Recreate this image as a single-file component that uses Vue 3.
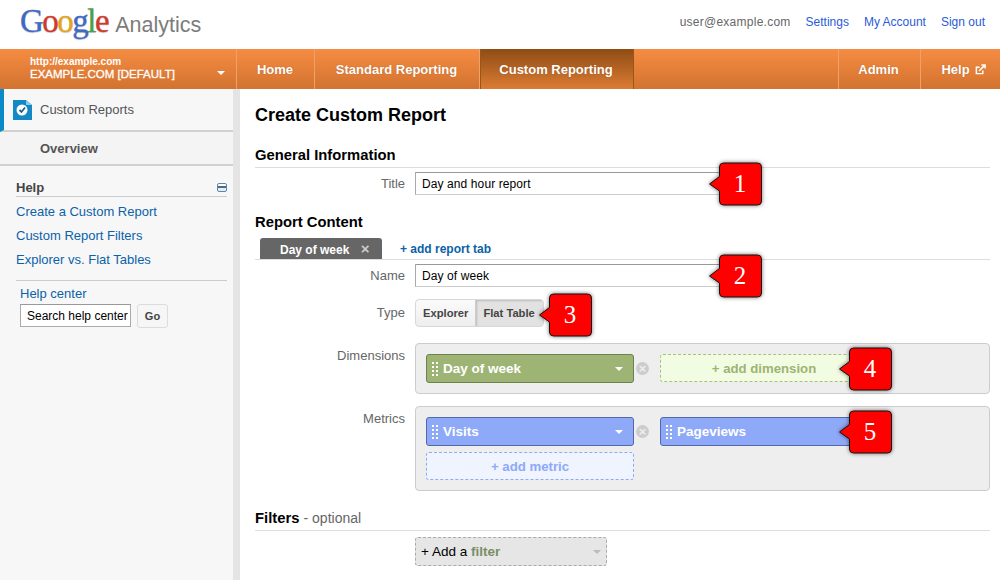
<template>
  <div class="page">
    <header class="top">
      <div class="logo">
        <span class="google"><i class="b">G</i><i class="r">o</i><i class="y">o</i><i class="b">g</i><i class="g">l</i><i class="r">e</i></span>
        <span class="analytics">Analytics</span>
      </div>
      <div class="user-links">
        <span class="email">user@example.com</span>
        <a>Settings</a>
        <a>My Account</a>
        <a>Sign out</a>
      </div>
    </header>

    <nav class="nav">
      <div class="account">
        <div class="account-text">
          <div class="account-url">http://example.com</div>
          <div class="account-name">EXAMPLE.COM [DEFAULT]</div>
        </div>
        <span class="arrow"></span>
      </div>
      <a class="nav-item home">Home</a>
      <a class="nav-item standard">Standard Reporting</a>
      <a class="nav-item custom active">Custom Reporting</a>
      <div class="nav-space"></div>
      <a class="nav-item admin">Admin</a>
      <a class="nav-item help">
        Help
        <svg width="11" height="11" viewBox="0 0 12 12" fill="none" stroke="#fff" stroke-width="1.6">
          <path d="M8.5 7v3.500h-7v-7H5" />
          <path d="M4.500 7.500L10.500 1.500M7 1h4v4" />
        </svg>
      </a>
    </nav>

    <div class="body">
      <aside class="side">
        <div class="side-title">
          <svg width="21" height="22" viewBox="0 0 21 22">
            <path d="M1 1h13l6 5v15H1z" fill="#1388c4" />
            <path d="M14 1l6 5h-6z" fill="#8cc8e8" />
            <circle cx="10" cy="11" r="5.500" fill="#fff" />
            <path d="M7.500 11l2 2L13 8.500" fill="none" stroke="#1b5f8c" stroke-width="1.800" />
          </svg>
          <span>Custom Reports</span>
        </div>
        <div class="side-overview">Overview</div>
        <div class="side-help">
          <div class="help-head">
            <span>Help</span>
            <span class="collapse"></span>
          </div>
          <a v-for="link in helpLinks" :key="link" class="help-link">{{ link }}</a>
          <div class="help-center">
            <a>Help center</a>
            <div class="search">
              <input class="search-box" value="Search help center" />
              <button class="go">Go</button>
            </div>
          </div>
        </div>
      </aside>

      <main class="main">
        <h1>Create Custom Report</h1>

        <h2 class="section first">General Information</h2>
        <div class="row title-row">
          <label>Title</label>
          <input class="field" value="Day and hour report" />
        </div>

        <h2 class="section content-head">Report Content</h2>
        <div class="tabs">
          <div class="tab">Day of week <span class="tab-x">×</span></div>
          <a class="add-tab">+ add report tab</a>
        </div>
        <div class="row name-row">
          <label>Name</label>
          <input class="field" value="Day of week" />
        </div>
        <div class="row type-row">
          <label>Type</label>
          <div class="toggle">
            <span class="toggle-btn">Explorer</span>
            <span class="toggle-btn on">Flat Table</span>
          </div>
        </div>

        <div class="row panel-row dims">
          <label>Dimensions</label>
          <div class="panel">
            <div class="slot">
              <div class="chip green">
                <span class="grip"></span>
                <span class="chip-text">Day of week</span>
                <span class="chip-arrow"></span>
              </div>
            </div>
            <span class="remove">×</span>
            <div class="slot">
              <div class="add green-add">+ add dimension</div>
            </div>
          </div>
        </div>

        <div class="row panel-row metrics">
          <label>Metrics</label>
          <div class="panel">
            <div class="slot">
              <div class="chip blue">
                <span class="grip"></span>
                <span class="chip-text">Visits</span>
                <span class="chip-arrow"></span>
              </div>
              <div class="add blue-add">+ add metric</div>
            </div>
            <span class="remove">×</span>
            <div class="slot">
              <div class="chip blue">
                <span class="grip"></span>
                <span class="chip-text">Pageviews</span>
              </div>
            </div>
          </div>
        </div>

        <h2 class="section filters-head">Filters <span class="optional">- optional</span></h2>
        <div class="row filter-row">
          <label></label>
          <div class="add-filter">
            <span>+ Add a <b>filter</b></span>
            <span class="filter-arrow"></span>
          </div>
        </div>
      </main>
    </div>

    <div
      v-for="c in callouts"
      :key="c.n"
      class="callout"
      :style="{ left: c.x + 'px', top: c.y + 'px' }"
    >
      <svg width="56" height="46" viewBox="0 0 56 46">
        <path
          d="M13.500 6a4 4 0 0 1 4-4h34a4 4 0 0 1 4 4v34a4 4 0 0 1-4 4h-34a4 4 0 0 1-4-4V30L3.500 23L13.500 15.500z"
          fill="#f00"
          stroke="#111"
          stroke-width="1"
        />
      </svg>
      <span class="callout-n">{{ c.n }}</span>
    </div>
  </div>
</template>

<script setup>
const helpLinks = ["Create a Custom Report", "Custom Report Filters", "Explorer vs. Flat Tables"];

const callouts = [
  { n: 1, x: 706, y: 161 },
  { n: 2, x: 706, y: 253 },
  { n: 3, x: 536, y: 292 },
  { n: 4, x: 836, y: 346 },
  { n: 5, x: 836, y: 409 },
];
</script>

<style>
html,
body {
  margin: 0;
  background: #fff;
}
</style>

<style scoped>
.page {
  position: relative;
  width: 1000px;
  height: 580px;
  overflow: hidden;
  font-family: "Liberation Sans", Arial, sans-serif;
  font-size: 12px;
  color: #000;
}

.top {
  height: 49px;
  display: flex;
  justify-content: space-between;
  align-items: center;
  padding: 0 15px 0 20px;
  box-sizing: border-box;
}

.logo {
  display: flex;
  align-items: baseline;
  gap: 7px;
  margin-top: -8px;
}

.google {
  font-family: "Liberation Serif", serif;
  font-size: 33px;
  letter-spacing: -1.500px;
  line-height: 40px;
  -webkit-text-stroke: 0.3px;
  text-shadow: 0 1px 1px rgba(0, 0, 0, 0.2);
}

.google i {
  font-style: normal;
}

.b { color: #3f69c4; }
.r { color: #cf3a2c; }
.y { color: #e2a521; }
.g { color: #4c9f4b; }

.analytics {
  font-size: 21.500px;
  color: #7c7c7c;
}

.user-links {
  display: flex;
  gap: 15px;
  margin-top: -5px;
}

.email {
  color: #666;
  letter-spacing: 0.25px;
}

.user-links a {
  color: #2a5bd7;
}

.nav {
  height: 40px;
  display: flex;
  background: linear-gradient(#f68c43, #d2732f);
  color: #fff;
  font-weight: bold;
  font-size: 13px;
}

.account {
  width: 237px;
  box-sizing: border-box;
  padding: 7px 11px 0 30px;
  display: flex;
  justify-content: space-between;
  border-right: 1px solid #eda26c;
}

.account-url {
  font-size: 10px;
  line-height: 11px;
}

.account-name {
  font-size: 11.500px;
  line-height: 14px;
  font-weight: normal;
  -webkit-text-stroke: 0.3px #fff;
}

.arrow {
  width: 0;
  height: 0;
  margin-top: 15px;
  border: 4px solid transparent;
  border-top: 4px solid #fff;
}

.nav-item {
  display: flex;
  align-items: center;
  justify-content: center;
  gap: 5px;
  box-sizing: border-box;
  padding-right: 2px;
  border-left: 1px solid transparent;
  border-right: 1px solid #eda26c;
  text-shadow: 0 0 1px rgba(120, 60, 10, 0.5);
}

.home { width: 78px; }
.standard { width: 165px; }
.custom { width: 154px; }
.admin { width: 83px; border-left-color: #eda26c; }
.help { width: 79px; border-right: none; padding: 0 0 0 5px; }

.active {
  background: linear-gradient(#8f4c14, #dc7c34);
  border: 1px solid #9a5517;
  border-bottom: none;
  border-top: none;
}

.nav-space {
  flex: 1;
}

.body {
  display: flex;
  height: 491px;
}

.side {
  width: 233px;
  flex-shrink: 0;
  background: #f7f7f7;
  color: #555;
  box-sizing: border-box;
}

.side-title {
  height: 43px;
  box-sizing: border-box;
  border-left: 4px solid #0a8ac8;
  border-bottom: 2px solid #d0d0d0;
  display: flex;
  align-items: center;
  gap: 7px;
  padding-left: 8px;
  font-size: 13px;
}

.side-overview {
  height: 34px;
  line-height: 34px;
  padding-left: 40px;
  font-weight: bold;
  font-size: 13px;
  background: #f4f4f4;
  border-bottom: 2px solid #d0d0d0;
  box-sizing: border-box;
}

.side-help {
  padding: 14px 6px 0 16px;
  display: flex;
  flex-direction: column;
}

.help-head {
  display: flex;
  justify-content: space-between;
  align-items: center;
  font-weight: bold;
  font-size: 13px;
  color: #444;
  line-height: 15px;
  padding-bottom: 1px;
  border-bottom: 1px solid #ccc;
  margin-bottom: 3px;
}

.collapse {
  width: 8px;
  height: 7px;
  border: 1px solid #5b87a8;
  border-radius: 2px;
  background: linear-gradient(#fff 35%, #4a6a88 35%, #4a6a88 60%, #e3ecf2 60%);
}

.help-link {
  color: #0b62a8;
  font-size: 13px;
  line-height: 24px;
}

.help-center {
  margin-top: 8px;
  border-top: 1px solid #ccc;
  padding: 6px 0 0 4px;
  color: #0b62a8;
  font-size: 13px;
  line-height: 14px;
}

.search {
  display: flex;
  gap: 6px;
  margin-top: 3px;
}

.search-box {
  width: 111px;
  height: 23px;
  box-sizing: border-box;
  padding: 0 0 0 6px;
  border: 1px solid #aaa;
  border-top-color: #999;
  background: #fff;
  font: 12px "Liberation Sans", Arial, sans-serif;
  color: #000;
}

.go {
  width: 31px;
  height: 24px;
  padding: 0;
  border: 1px solid #ddd;
  border-radius: 3px;
  background: #f6f6f6;
  font: bold 11px "Liberation Sans", Arial, sans-serif;
  color: #444;
}

.main {
  flex: 1;
  min-width: 0;
  border-left: 7px solid #e4e4e4;
  padding: 0 10px 0 15px;
}

h1 {
  margin: 15px 0 0;
  font-size: 18px;
  line-height: 22px;
}

.section {
  margin: 0;
  font-size: 14.800px;
  line-height: 18px;
  padding-bottom: 3px;
  border-bottom: 1px solid #ddd;
}

.section.first {
  margin-top: 20px;
}

.section.content-head {
  margin-top: 18px;
  border-bottom: none;
  padding-bottom: 0;
}

.section.filters-head {
  margin-top: 18px;
}

.optional {
  font-weight: normal;
  color: #666;
  font-size: 14px;
}

.row {
  display: flex;
}

.row label {
  width: 150px;
  margin-right: 10px;
  text-align: right;
  color: #666;
  font-size: 13px;
  flex-shrink: 0;
}

.title-row {
  margin-top: 4px;
  align-items: center;
}

.field {
  width: 310px;
  height: 23px;
  box-sizing: border-box;
  padding: 0 6px;
  border: 1px solid #ccc;
  border-top: 1px solid #999;
  border-left: 1px solid #aaa;
  font: 12px "Liberation Sans", Arial, sans-serif;
  letter-spacing: 0.1px;
  color: #000;
}

.tabs {
  display: flex;
  align-items: center;
  margin-top: 7px;
  height: 21px;
  padding-left: 5px;
  border-bottom: 1px solid #ddd;
}

.tab {
  width: 122px;
  height: 21px;
  box-sizing: border-box;
  padding-left: 20px;
  line-height: 21px;
  background: #666;
  color: #fff;
  font-weight: bold;
  border-radius: 3px 3px 0 0;
}

.tab-x {
  margin-left: 8px;
  color: #ccc;
  font-size: 15px;
}

.add-tab {
  margin-left: 18px;
  color: #0b62a8;
  font-weight: bold;
}

.name-row {
  margin-top: 4px;
  align-items: center;
}

.type-row {
  margin-top: 12px;
  align-items: center;
}

.type-row label {
  padding-bottom: 2px;
}

.toggle {
  display: flex;
  height: 28px;
  box-sizing: border-box;
  border: 1px solid #d8d8d8;
  border-radius: 4px;
  background: linear-gradient(#fbfbfb, #eee);
  overflow: hidden;
}

.toggle-btn {
  font-weight: bold;
  font-size: 11.200px;
  color: #444;
  line-height: 27px;
  padding: 0 7px;
}

.toggle-btn.on {
  background: #e2e2e2;
  border-left: 1px solid #ccc;
  box-shadow: inset 1px 1px 2px #bbb;
  padding: 0 8px 0 7px;
}

.dims {
  margin-top: 16px;
}

.metrics {
  margin-top: 12px;
}

.panel-row label {
  padding-top: 5px;
}

.panel {
  flex: 1;
  display: flex;
  align-items: flex-start;
  box-sizing: border-box;
  padding: 10px;
  background: #eee;
  border: 1px solid #ccc;
  border-radius: 4px;
}

.slot {
  width: 208px;
  display: flex;
  flex-direction: column;
  gap: 6px;
}

.chip {
  height: 29px;
  box-sizing: border-box;
  border-radius: 3px;
  display: flex;
  align-items: center;
  padding: 0 10px 0 4px;
  color: #fff;
  font-weight: bold;
  font-size: 13.500px;
}

.green {
  background: #9db474;
  border: 1px solid #6c8248;
}

.blue {
  background: #8ea9f8;
  border: 1px solid #5268a8;
}

.grip {
  width: 8px;
  height: 16px;
  margin-right: 4px;
  background-image: radial-gradient(circle, #fff 1px, transparent 1.200px);
  background-size: 4px 4px;
}

.chip-text {
  flex: 1;
}

.chip-arrow {
  width: 0;
  height: 0;
  margin-top: 4px;
  border: 4px solid transparent;
  border-top: 4px solid #fff;
}

.remove {
  width: 13px;
  height: 13px;
  margin: 8px 11px 0 2px;
  flex-shrink: 0;
  border-radius: 50%;
  background: #ccc;
  color: #eee;
  font-size: 13px;
  font-weight: bold;
  line-height: 13px;
  text-align: center;
}

.add {
  height: 28px;
  box-sizing: border-box;
  border-radius: 3px;
  text-align: center;
  font-weight: bold;
  font-size: 13.200px;
  line-height: 27px;
}

.green-add {
  background: #f2fce2;
  border: 1px dashed #a9c078;
  color: #9db474;
}

.blue-add {
  background: #eff4fe;
  border: 1px dashed #8ea9f8;
  color: #8ea9f8;
}

.filter-row {
  margin-top: 6px;
}

.add-filter {
  width: 192px;
  height: 29px;
  box-sizing: border-box;
  display: flex;
  justify-content: space-between;
  align-items: center;
  padding: 0 5px;
  background: #e6e6e6;
  border: 1px dashed #aaa;
  border-radius: 3px;
  font-size: 13.500px;
}

.add-filter b {
  color: #7a8f68;
}

.filter-arrow {
  width: 0;
  height: 0;
  margin-top: 4px;
  border: 4px solid transparent;
  border-top: 4px solid #bbb;
}

.callout {
  position: absolute;
  width: 56px;
  height: 46px;
}

.callout svg {
  display: block;
  filter: drop-shadow(0 0 2px rgba(0, 0, 0, 0.55));
}

.callout-n {
  position: absolute;
  left: 12px;
  right: 0;
  top: 0;
  text-align: center;
  font-family: "Liberation Serif", serif;
  font-size: 25px;
  line-height: 45px;
  color: #fff;
}
</style>
